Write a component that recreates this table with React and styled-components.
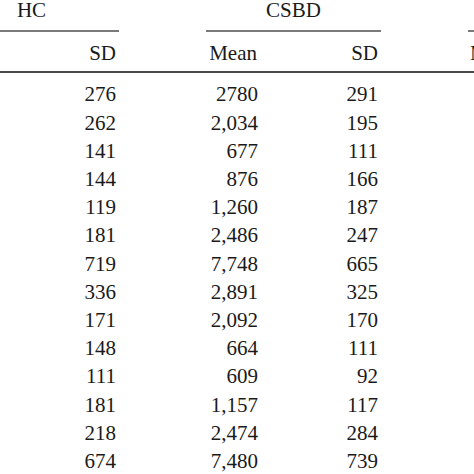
import React from "react";
import styled, { createGlobalStyle } from "styled-components";

const GlobalStyle = createGlobalStyle`
  html, body {
    margin: 0;
    padding: 0;
    background: #ffffff;
  }
  body {
    width: 474px;
    height: 474px;
    overflow: hidden;
  }
`;

const groups = [
  { name: "HC", rows: [
    ["", "276"], ["", "262"], ["", "141"], ["", "144"], ["", "119"], ["", "181"], ["", "719"],
    ["", "336"], ["", "171"], ["", "148"], ["", "111"], ["", "181"], ["", "218"], ["", "674"],
  ] },
  { name: "CSBD", rows: [
    ["2780", "291"], ["2,034", "195"], ["677", "111"], ["876", "166"], ["1,260", "187"],
    ["2,486", "247"], ["7,748", "665"], ["2,891", "325"], ["2,092", "170"], ["664", "111"],
    ["609", "92"], ["1,157", "117"], ["2,474", "284"], ["7,480", "739"],
  ] },
  { name: "", rows: [] },
];

const Page = styled.div`
  width: 474px;
  height: 474px;
  overflow: hidden;
  font-family: "Liberation Serif", "Times New Roman", serif;
  font-size: 21px;
  color: #1a1a1a;
`;

const Table = styled.div`
  display: grid;
  grid-template-columns: 54px 121px 87px 54px 121px 87px 54px 121px;
  margin-left: -56px;
  margin-top: -4px;
  line-height: 28.2px;
`;

const GroupHead = styled.div`
  grid-column: ${(p) => p.$col} / span 2;
  grid-row: 1;
  text-align: center;
  padding-bottom: 6px;
  border-bottom: 2px solid #7a7a7a;
`;

const SubHead = styled.div`
  grid-row: 2;
  grid-column: ${(p) => p.$col};
  text-align: ${(p) => (p.$left ? "left" : "right")};
  padding: 7px ${(p) => (p.$left ? "0" : "3px")} 4px ${(p) => (p.$left ? "2px" : "0")};
`;

const Rule = styled.div`
  grid-row: 3;
  grid-column: 1 / -1;
  height: 2px;
  background: #4a4a4a;
  margin-bottom: 7px;
`;

const Cell = styled.div`
  grid-row: ${(p) => p.$row};
  grid-column: ${(p) => p.$col};
  text-align: right;
  padding-right: ${(p) => (p.$sd ? "3px" : "2px")};
  white-space: pre;
`;

export default function App() {
  return (
    <>
      <GlobalStyle />
      <Page>
        <Table>
          {groups.map((g, gi) => (
            <GroupHead key={"h" + gi} $col={gi * 3 + 1}>{g.name || "\u00a0"}</GroupHead>
          ))}
          {groups.map((g, gi) => (
            <React.Fragment key={"s" + gi}>
              <SubHead $col={gi * 3 + 1} $left={gi === 2}>Mean</SubHead>
              <SubHead $col={gi * 3 + 2}>SD</SubHead>
            </React.Fragment>
          ))}
          <Rule />
          {groups.map((g, gi) =>
            g.rows.map((r, ri) => (
              <React.Fragment key={gi + "-" + ri}>
                <Cell $row={ri + 4} $col={gi * 3 + 1}>{r[0]}</Cell>
                <Cell $row={ri + 4} $col={gi * 3 + 2} $sd>{r[1]}</Cell>
              </React.Fragment>
            ))
          )}
        </Table>
      </Page>
    </>
  );
}
